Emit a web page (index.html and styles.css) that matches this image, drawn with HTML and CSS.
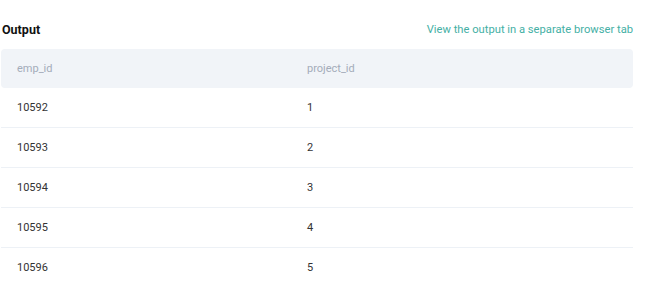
FILE: index.html
```html
<!DOCTYPE html>
<html>
<head>
<meta charset="utf-8">
<link rel="stylesheet" href="styles.css">
</head>
<body>
<div class="panel">
  <div class="top">
    <span class="title">Output</span>
    <a class="link" href="#">View the output in a separate browser tab</a>
  </div>
  <div class="table">
    <div class="row head"><div class="cell">emp_id</div><div class="cell">project_id</div></div>
    <div class="row"><div class="cell">10592</div><div class="cell">1</div></div>
    <div class="row"><div class="cell">10593</div><div class="cell">2</div></div>
    <div class="row"><div class="cell">10594</div><div class="cell">3</div></div>
    <div class="row"><div class="cell">10595</div><div class="cell">4</div></div>
    <div class="row last"><div class="cell">10596</div><div class="cell">5</div></div>
  </div>
</div>
</body>
</html>
```
FILE: styles.css
```css
html, body {
  margin: 0;
  padding: 0;
  background: #ffffff;
  font-family: Roboto, "Liberation Sans", sans-serif;
}
.panel {
  padding: 19px 0 0 1px;
  box-sizing: border-box;
  width: 633px;
}
.top {
  display: flex;
  justify-content: space-between;
  align-items: center;
  height: 20px;
  margin-bottom: 10px;
  margin-left: 1px;
}
.title {
  font-size: 12.5px;
  font-weight: 700;
  color: #111111;
}
.link {
  font-size: 11.2px;
  color: #45b0a5;
  text-decoration: none;
}
.table {
  display: flex;
  flex-direction: column;
}
.row {
  display: grid;
  grid-template-columns: 290px 1fr;
  height: 39px;
  align-items: center;
  font-size: 11px;
  color: #333333;
  border-bottom: 1px solid #edf1f6;
}
.row.head {
  background: #f1f4f8;
  border-radius: 4px;
  border-bottom: none;
  color: #a4acba;
}
.row.last {
  border-bottom: none;
}
.cell {
  padding-left: 16px;
}
```
